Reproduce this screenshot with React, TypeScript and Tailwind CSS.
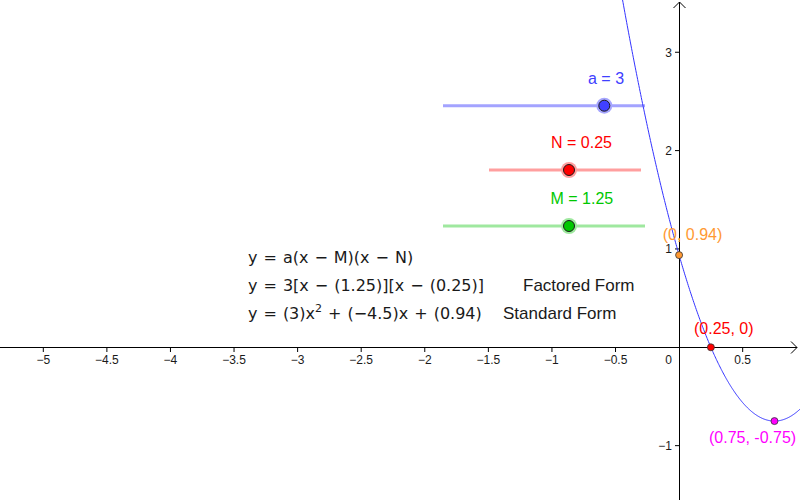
import React from "react";

const OX = 679.1;
const OY = 347.3;
const SX = 127.16;
const SY = 98.35;
const px = (x: number) => OX + x * SX;
const py = (y: number) => OY - y * SY;
const f = (x: number) => 3 * x * x - 4.5 * x + 0.9375;

const FONT = "'Liberation Sans', Arial, sans-serif";

function curvePath() {
  const pts: string[] = [];
  for (let i = 0; i <= 300; i++) {
    const x = -0.47 + (i / 300) * (0.97 + 0.47);
    pts.push(`${i === 0 ? "M" : "L"}${px(x).toFixed(2)},${py(f(x)).toFixed(2)}`);
  }
  return pts.join(" ");
}

const xTicks = [-5, -4.5, -4, -3.5, -3, -2.5, -2, -1.5, -1, -0.5, 0.5];
const yTicks = [3, 2, 1, -1];
const fmt = (v: number) => (v < 0 ? "\u2212" + String(-v) : String(v));

function Slider({
  x1,
  x2,
  y,
  cx,
  line,
  halo,
  fill,
  label,
  lx,
  color,
}: {
  x1: number;
  x2: number;
  y: number;
  cx: number;
  line: string;
  halo: string;
  fill: string;
  label: string;
  lx: number;
  color: string;
}) {
  return (
    <g>
      <line x1={x1} y1={y} x2={x2} y2={y} stroke={line} strokeWidth={3} />
      <circle cx={cx} cy={y} r={8} fill={halo} />
      <circle cx={cx} cy={y} r={5.5} fill={fill} stroke="#1a1a1a" strokeWidth={1} />
      <text x={lx} y={y - 22} fontSize={16} fill={color} fontFamily={FONT}>
        {label}
      </text>
    </g>
  );
}

const Op = ({ c }: { c: string }) => <span className="mx-[6px]">{c}</span>;

export default function App() {
  return (
    <div className="relative w-[800px] h-[500px] bg-white overflow-hidden">
      <svg width={800} height={500} className="block">
        {/* axes */}
        <line x1={0} y1={347.5} x2={797} y2={347.5} stroke="#000" strokeWidth={1} />
        <polyline points="791,341.5 797,347.5 791,353.5" fill="none" stroke="#000" strokeWidth={1} />
        <line x1={679.5} y1={2} x2={679.5} y2={500} stroke="#000" strokeWidth={1} />
        <polyline points="673.5,8 679.5,2 685.5,8" fill="none" stroke="#000" strokeWidth={1} />

        {xTicks.map((t) => (
          <g key={t}>
            <line x1={px(t)} y1={347.5} x2={px(t)} y2={352} stroke="#000" strokeWidth={1} />
            <text x={px(t)} y={363.5} fontSize={12} textAnchor="middle" fill="#1a1a1a" fontFamily={FONT}>
              {fmt(t)}
            </text>
          </g>
        ))}
        <text x={668.5} y={363.5} fontSize={12} textAnchor="middle" fill="#1a1a1a" fontFamily={FONT}>
          0
        </text>
        {yTicks.map((t) => (
          <g key={t}>
            <line x1={675} y1={py(t)} x2={679.5} y2={py(t)} stroke="#000" strokeWidth={1} />
            <text x={672} y={py(t) + 4.3} fontSize={12} textAnchor="end" fill="#1a1a1a" fontFamily={FONT}>
              {fmt(t)}
            </text>
          </g>
        ))}

        {/* sliders */}
        <Slider x1={443} x2={645} y={105.7} cx={604.3} line="#a3a3ff" halo="#a6a6ff" fill="#4040ff" label="a = 3" lx={588} color="#4040ff" />
        <Slider x1={489} x2={641} y={170} cx={569} line="#ff9f9f" halo="#ff9f9f" fill="#ff0000" label="N = 0.25" lx={551} color="#ff0000" />
        <Slider x1={443} x2={645} y={226} cx={569} line="#9fe89f" halo="#9fe89f" fill="#00c800" label="M = 1.25" lx={550.5} color="#00c800" />

        {/* curve */}
        <path d={curvePath()} fill="none" stroke="#3333ff" strokeWidth={1} />

        {/* points */}
        <circle cx={px(0)} cy={py(0.9375)} r={3.5} fill="#ff9933" stroke="#333" strokeWidth={0.8} />
        <circle cx={px(0.25)} cy={py(0)} r={3.5} fill="#ff0000" stroke="#333" strokeWidth={0.8} />
        <circle cx={px(0.75)} cy={py(-0.75)} r={3.5} fill="#ff00ff" stroke="#333" strokeWidth={0.8} />

        <text x={662.7} y={240} fontSize={16} fill="#ff9933" fontFamily={FONT}>
          (0, 0.94)
        </text>
        <text x={694} y={334} fontSize={16} fill="#ff0000" fontFamily={FONT}>
          (0.25, 0)
        </text>
        <text x={709} y={443} fontSize={16} fill="#ff00ff" fontFamily={FONT}>
          (0.75, -0.75)
        </text>
      </svg>

      <div className="absolute left-[248px] top-[244px] flex flex-col text-[16px] leading-[28px] text-[#1a1a1a] font-['DejaVu_Sans',sans-serif] whitespace-nowrap">
        <div className="flex items-baseline h-[28px]">
          <span>
            y<Op c="=" />a(x<Op c={"\u2212"} />M)(x<Op c={"\u2212"} />N)
          </span>
        </div>
        <div className="flex items-baseline h-[28px]">
          <span className="w-[275px]">
            y<Op c="=" />3[x<Op c={"\u2212"} />(1.25)][x<Op c={"\u2212"} />(0.25)]
          </span>
          <span className="text-[17px] font-['Liberation_Sans',Arial,sans-serif]">Factored Form</span>
        </div>
        <div className="flex items-baseline h-[28px]">
          <span className="w-[255px]">
            y<Op c="=" />(3)x<sup className="text-[11px] -top-[7px]">2</sup>
            <Op c="+" />({"\u2212"}4.5)x<Op c="+" />(0.94)
          </span>
          <span className="text-[17px] font-['Liberation_Sans',Arial,sans-serif]">Standard Form</span>
        </div>
      </div>
    </div>
  );
}
